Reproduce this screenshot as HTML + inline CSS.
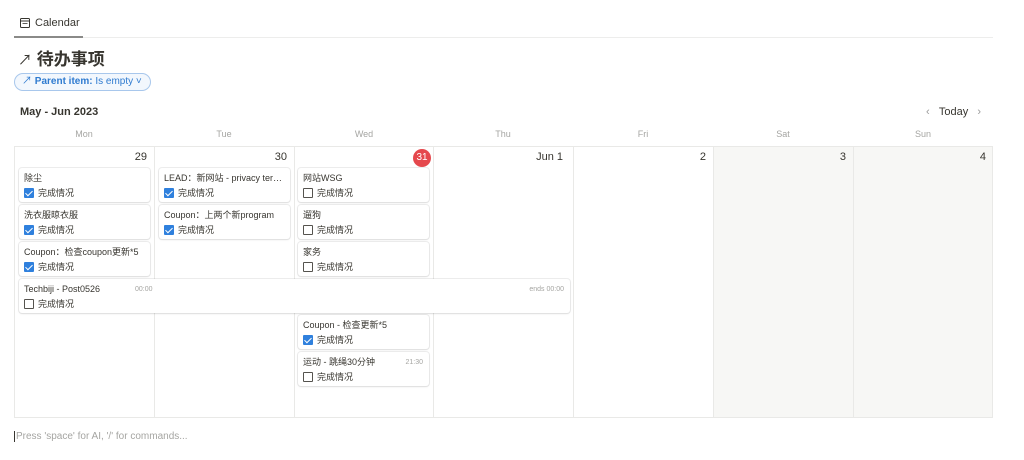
<!DOCTYPE html>
<html><head><meta charset="utf-8"><style>
*{box-sizing:border-box;margin:0;padding:0}
body{width:1024px;height:460px;background:#fff;font-family:"Liberation Sans","Noto Sans CJK SC",sans-serif;color:#37352f;position:relative;overflow:hidden}
.abs{position:absolute}
.tab{left:20px;top:17px;font-size:11px;color:#37352f;display:flex;align-items:center;gap:5px}
.tabline{left:14px;top:36px;width:69px;height:2px;background:#8a8a88}
.hr{left:14px;top:37px;width:979px;height:1px;background:#ededec}
h1{position:absolute;left:18px;top:45px;font-size:17px;font-weight:bold;font-family:"Liberation Sans","Noto Sans CJK SC",sans-serif}
.pill{left:14px;top:73px;height:18px;width:137px;border:1px solid #a8c7ec;border-radius:10px;background:#f2f7fd;color:#2f7bd0;font-size:10px;padding-left:7px;line-height:16px;white-space:nowrap;overflow:hidden}
.month{left:20px;top:106px;font-size:11px;font-weight:bold}
.nav{left:926px;top:106px;font-size:11px;color:#37352f}
.dn{top:129px;width:140px;text-align:center;font-size:9px;color:#a5a5a2}
.grid{left:14px;top:146px;width:979px;height:272px;border:1px solid #e9e9e7}
.col{top:146px;height:272px;border-left:1px solid #e9e9e7}
.num{top:151px;font-size:11px;text-align:right;width:130px}
.card{position:absolute;height:34px;background:#fff;border-radius:3px;box-shadow:0 0 0 1px rgba(15,15,15,.07),0 1px 2px rgba(15,15,15,.08);font-size:9px;padding:4px 5px;line-height:12px}
.card .t{height:13px;white-space:nowrap;overflow:hidden;text-overflow:ellipsis}
.card .c{display:flex;align-items:center;gap:4px;margin-top:2px;height:12px}
.cb{width:10px;height:10px;border:1px solid #55534e;border-radius:1px;display:inline-block}
.cb.on{background:#2f80dd;border-color:#2f80dd;position:relative}
.cb.on:after{content:"";position:absolute;left:2px;top:0px;width:3px;height:6px;border:solid #fff;border-width:0 1.3px 1.3px 0;transform:rotate(45deg)}
.tm{position:absolute;right:6px;top:5px;font-size:7px;color:#a5a5a2}
.foot{left:14px;top:431px;font-size:10px;color:#a5a5a2;border-left:1px solid #37352f;padding-left:1px}
</style></head><body>
<div class="abs tab"><svg width="10" height="10" viewBox="0 0 10 10"><rect x="0.5" y="0.5" width="9" height="9" rx="1" fill="none" stroke="#37352f"/><line x1="0.5" y1="3" x2="9.5" y2="3" stroke="#37352f"/><line x1="2.5" y1="5.5" x2="7.5" y2="5.5" stroke="#37352f" stroke-width=".8"/></svg>Calendar</div>
<div class="abs hr"></div><div class="abs tabline"></div>
<h1><span style="font-weight:normal;font-size:14px">↗</span> 待办事项</h1>
<div class="abs pill">↗ <b>Parent item:</b> Is empty ˅</div>
<div class="abs month">May - Jun 2023</div>
<div class="abs nav"><span style="color:#999">‹</span>&nbsp;&nbsp;&nbsp;Today&nbsp;&nbsp;&nbsp;<span style="color:#999">›</span></div>
<div class="abs" style="left:713px;top:146px;width:280px;height:272px;background:#f7f7f5"></div>
<div class="abs grid"></div>
<div class="abs col" style="left:154px"></div><div class="abs col" style="left:294px"></div><div class="abs col" style="left:433px"></div><div class="abs col" style="left:573px"></div><div class="abs col" style="left:713px"></div><div class="abs col" style="left:853px"></div>
<div class="abs dn" style="left:14px">Mon</div><div class="abs dn" style="left:154px">Tue</div><div class="abs dn" style="left:294px">Wed</div><div class="abs dn" style="left:433px">Thu</div><div class="abs dn" style="left:573px">Fri</div><div class="abs dn" style="left:713px">Sat</div><div class="abs dn" style="left:853px">Sun</div>
<div class="abs num" style="left:17px">29</div><div class="abs num" style="left:157px">30</div>
<div class="abs" style="left:413px;top:149px;width:18px;height:18px;border-radius:9px;background:#e5484d;color:#fff;font-size:10px;text-align:center;line-height:18px">31</div>
<div class="abs num" style="left:433px">Jun 1</div><div class="abs num" style="left:576px">2</div><div class="abs num" style="left:716px">3</div><div class="abs num" style="left:856px">4</div>

<div class="card" style="left:19px;top:168px;width:131px"><div class="t">除尘</div><div class="c"><span class="cb on"></span>完成情况</div></div>
<div class="card" style="left:19px;top:205px;width:131px"><div class="t">洗衣服晾衣服</div><div class="c"><span class="cb on"></span>完成情况</div></div>
<div class="card" style="left:19px;top:242px;width:131px"><div class="t">Coupon：检查coupon更新*5</div><div class="c"><span class="cb on"></span>完成情况</div></div>
<div class="card" style="left:19px;top:279px;width:551px"><div class="t">Techbiji - Post0526</div><div class="c"><span class="cb"></span>完成情况</div><span class="tm" style="right:auto;left:116px">00:00</span><span class="tm">ends 00:00</span></div>
<div class="card" style="left:159px;top:168px;width:131px"><div class="t">LEAD：新网站 - privacy term...</div><div class="c"><span class="cb on"></span>完成情况</div></div>
<div class="card" style="left:159px;top:205px;width:131px"><div class="t">Coupon：上两个新program</div><div class="c"><span class="cb on"></span>完成情况</div></div>
<div class="card" style="left:298px;top:168px;width:131px"><div class="t">网站WSG</div><div class="c"><span class="cb"></span>完成情况</div></div>
<div class="card" style="left:298px;top:205px;width:131px"><div class="t">遛狗</div><div class="c"><span class="cb"></span>完成情况</div></div>
<div class="card" style="left:298px;top:242px;width:131px"><div class="t">家务</div><div class="c"><span class="cb"></span>完成情况</div></div>
<div class="card" style="left:298px;top:315px;width:131px"><div class="t">Coupon - 检查更新*5</div><div class="c"><span class="cb on"></span>完成情况</div></div>
<div class="card" style="left:298px;top:352px;width:131px"><div class="t">运动 - 跳绳30分钟</div><div class="c"><span class="cb"></span>完成情况</div><span class="tm">21:30</span></div>
<div class="abs foot">Press 'space' for AI, '/' for commands...</div>
</body></html>
